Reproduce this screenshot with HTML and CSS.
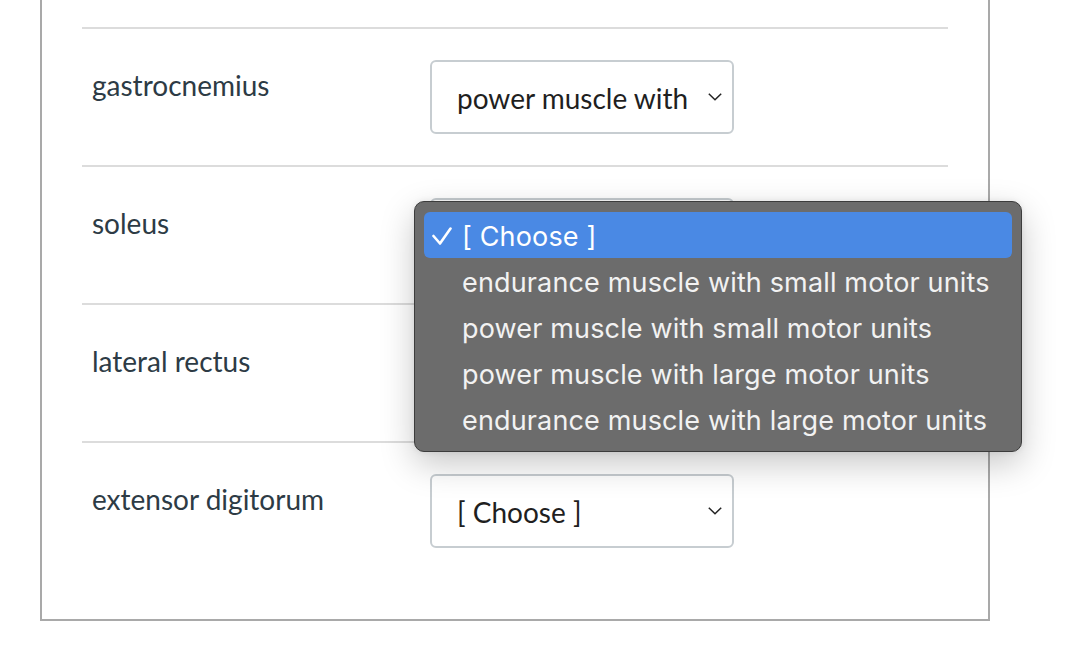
FILE: index.html
```html
<!DOCTYPE html>
<html lang="en">
<head>
<meta charset="utf-8">
<title>Matching</title>
<link rel="stylesheet" href="styles.css">
</head>
<body>
<div class="panel">
  <div class="rows">
    <div class="row">
      <div class="label">gastrocnemius</div>
      <div class="select"><span class="value">power muscle with small motor units</span><svg class="chev" viewBox="0 0 14 8" width="14" height="8"><polyline points="0.8,0.8 7,6.8 13.2,0.8"/></svg></div>
    </div>
    <div class="row">
      <div class="label">soleus</div>
      <div class="select-wrap">
        <div class="select"><span class="value">[ Choose ]</span><svg class="chev" viewBox="0 0 14 8" width="14" height="8"><polyline points="0.8,0.8 7,6.8 13.2,0.8"/></svg></div>
        <ul class="menu">
          <li class="opt selected"><svg class="check" viewBox="0 0 20 18" width="20" height="18"><polyline points="1.5,9 8,16.5 18.5,1.5"/></svg>[ Choose ]</li>
          <li class="opt">endurance muscle with small motor units</li>
          <li class="opt">power muscle with small motor units</li>
          <li class="opt">power muscle with large motor units</li>
          <li class="opt">endurance muscle with large motor units</li>
        </ul>
      </div>
    </div>
    <div class="row">
      <div class="label">lateral rectus</div>
      <div class="select"><span class="value">[ Choose ]</span><svg class="chev" viewBox="0 0 14 8" width="14" height="8"><polyline points="0.8,0.8 7,6.8 13.2,0.8"/></svg></div>
    </div>
    <div class="row last">
      <div class="label">extensor digitorum</div>
      <div class="select"><span class="value">[ Choose ]</span><svg class="chev" viewBox="0 0 14 8" width="14" height="8"><polyline points="0.8,0.8 7,6.8 13.2,0.8"/></svg></div>
    </div>
  </div>
</div>
</body>
</html>
```

FILE: styles.css
```css
html, body {
  margin: 0;
  padding: 0;
  background: #ffffff;
}

body {
  font-family: Lato, "Noto Sans", sans-serif;
}

.panel {
  margin-left: 40px;
  border: 2px solid #a9a9a9;
  border-top: none;
  padding: 27px 40px 0 40px;
  box-sizing: content-box;
  width: 866px;
}

.rows {
  display: flex;
  flex-direction: column;
}

.row {
  display: flex;
  align-items: flex-start;
  border-top: 2px solid #dcdcdc;
  height: 136px;
}

.row.last {
  height: 176px;
}

.label {
  width: 338px;
  padding-left: 10px;
  margin-top: 38px;
  font-size: 28px;
  line-height: 36px;
  color: #2d3b45;
}

.select-wrap {
  position: relative;
}

.select {
  margin-top: 31px;
  width: 304px;
  height: 74px;
  box-sizing: border-box;
  border: 2px solid #c7cdd1;
  border-radius: 6px;
  background: #fff;
  display: flex;
  align-items: center;
  padding: 0 10px 0 25px;
  font-size: 28px;
  color: #1f1f1f;
}

.value {
  width: 232px;
  flex: none;
  overflow: hidden;
  white-space: nowrap;
  padding-top: 2px;
}

.chev {
  margin-left: auto;
  flex: none;
}

.chev polyline {
  fill: none;
  stroke: #222;
  stroke-width: 1.5;
}

.menu {
  position: absolute;
  left: -16px;
  top: 34px;
  width: 608px;
  height: 251px;
  box-sizing: border-box;
  margin: 0;
  padding: 10px 9px;
  list-style: none;
  background: #6c6c6c;
  border: 1px solid #3c3c3c;
  border-radius: 10px;
  box-shadow: 0 12px 34px rgba(0, 0, 0, 0.22), 0 0 6px rgba(0, 0, 0, 0.08);
  font-family: Inter, "Liberation Sans", sans-serif;
  font-size: 27px;
  letter-spacing: 0.15px;
  color: #f2f2f2;
}

.opt {
  position: relative;
  height: 46px;
  box-sizing: border-box;
  padding-top: 2px;
  line-height: 46px;
  padding-left: 38px;
  border-radius: 6px;
  white-space: nowrap;
}

.opt.selected {
  background: #4a89e4;
  color: #ffffff;
}

.check {
  position: absolute;
  left: 8px;
  top: 15px;
}

.check polyline {
  fill: none;
  stroke: #ffffff;
  stroke-width: 2.6;
  stroke-linecap: round;
  stroke-linejoin: round;
}
```
